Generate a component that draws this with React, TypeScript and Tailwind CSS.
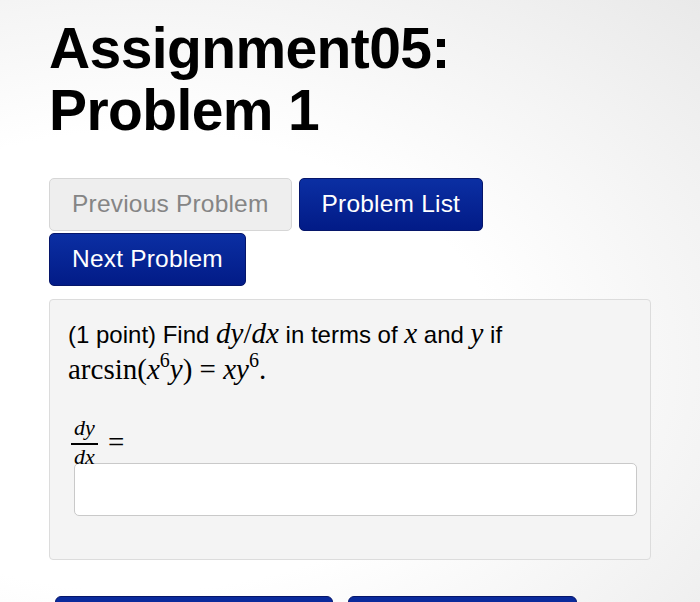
import type { ReactNode } from 'react';

const sans = { fontFamily: '"Liberation Sans", Arial, sans-serif' };

function V({ children }: { children: ReactNode }) {
  return <i className="font-['Liberation_Serif',serif] text-[29px] italic">{children}</i>;
}

function R({ children }: { children: ReactNode }) {
  return <span className="font-['Liberation_Serif',serif] text-[29px] not-italic">{children}</span>;
}

function Sup({ children }: { children: ReactNode }) {
  return <sup className="font-['Liberation_Serif',serif] text-[20px] not-italic top-[-0.6em]">{children}</sup>;
}

export default function App() {
  return (
    <div
      className="h-[602px] w-[700px] overflow-hidden bg-[radial-gradient(ellipse_at_20%_60%,#ffffff_45%,#e9e9e9_100%)] text-black"
      style={sans}
    >
      <div className="px-[49px] pt-[17px]">
        <h1 className="text-[57px] font-bold leading-[62px] tracking-[-0.6px]">
          Assignment05:
          <br />
          Problem 1
        </h1>

        <div className="mt-[37px] flex flex-wrap gap-x-[7px] gap-y-[1px]">
          <button className="h-[53px] rounded-[5px] border border-[#d6d6d6] bg-[#eeeeee] px-[22px] text-[24.5px] tracking-[0.2px] text-[#858585]">
            Previous Problem
          </button>
          <button className="h-[53px] rounded-[5px] border border-[#06166a] bg-[linear-gradient(#0b2fa3,#021b87)] px-[22px] text-[24.5px] tracking-[0.2px] text-white">
            Problem List
          </button>
          <div className="basis-full" />
          <button className="h-[53px] rounded-[5px] border border-[#06166a] bg-[linear-gradient(#0b2fa3,#021b87)] px-[22px] text-[24.5px] tracking-[0.2px] text-white">
            Next Problem
          </button>
        </div>

        <div className="mt-[13px] h-[261px] w-[602px] rounded-[4px] border border-[#dcdcdc] bg-[#f4f4f4] px-[18px] pt-[16px]">
          <p className="text-[24px] leading-[35px]">
            (1 point) Find <V>dy</V>
            <R>/</R>
            <V>dx</V> in terms of <V>x</V> and <V>y</V> if
            <br />
            <R>arcsin(</R>
            <V>x</V>
            <Sup>6</Sup>
            <V>y</V>
            <R>)</R>
            <R> = </R>
            <V>xy</V>
            <Sup>6</Sup>
            <R>.</R>
          </p>

          <div className="mt-[28px] flex items-center pl-[3px]">
            <div className="flex flex-col items-center font-['Liberation_Serif',serif] text-[22px] italic leading-[24px]">
              <span className="px-[1px]">dy</span>
              <span className="mt-[3px] h-[1.5px] w-[27px] bg-black" />
              <span className="px-[1px]">dx</span>
            </div>
            <span className="ml-[10px] font-['Liberation_Serif',serif] text-[29px]">=</span>
          </div>

          <div className="ml-[6px] mt-[-6px] h-[53px] w-[563px] rounded-[5px] border border-[#c9c9c9] bg-white" />
        </div>

        <div className="mt-[36px] flex gap-[15px] pl-[6px]">
          <div className="h-[40px] w-[278px] rounded-[6px] border border-[#06166a] bg-[#0a2a9c]" />
          <div className="h-[40px] w-[229px] rounded-[6px] border border-[#06166a] bg-[#0a2a9c]" />
        </div>
      </div>
    </div>
  );
}
